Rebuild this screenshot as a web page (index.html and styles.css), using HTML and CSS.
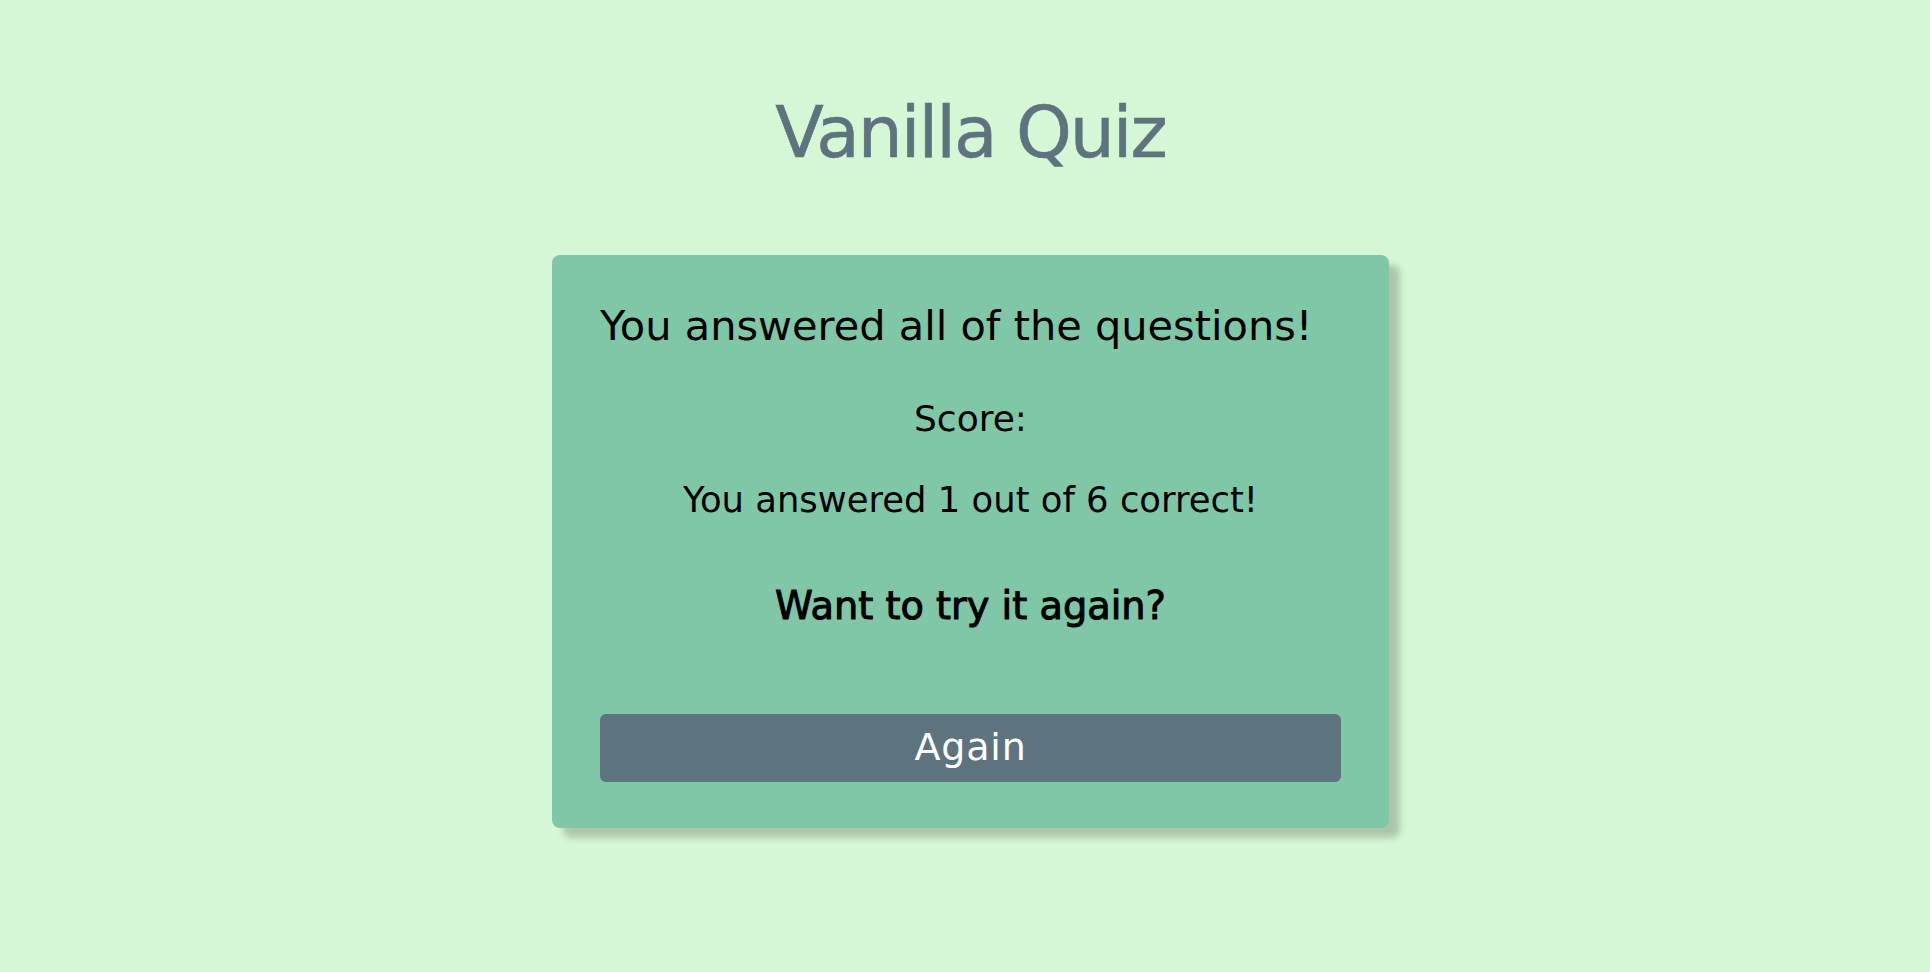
FILE: index.html
```html
<!DOCTYPE html>
<html lang="en">
<head>
  <meta charset="utf-8">
  <title>Vanilla Quiz</title>
  <link rel="stylesheet" href="styles.css">
</head>
<body>
  <main class="page">
    <h1 class="page-title">Vanilla Quiz</h1>
    <section class="quiz-card">
      <h2 class="result-heading">You answered all of the questions!</h2>
      <p class="score-label">Score:</p>
      <p class="score-text">You answered 1 out of 6 correct!</p>
      <p class="retry-prompt">Want to try it again?</p>
      <button class="again-button" type="button">Again</button>
    </section>
  </main>
</body>
</html>
```
FILE: styles.css
```css
html, body {
  margin: 0;
  padding: 0;
}

body {
  background: #d6f7d6;
  font-family: "DejaVu Sans", "Liberation Sans", sans-serif;
  color: #000;
  min-height: 972px;
}

.page {
  display: flex;
  flex-direction: column;
  align-items: center;
  padding: 90px 0 0 11px;
}

.page-title {
  margin: 0;
  font-size: 71px;
  line-height: 1.2;
  font-weight: normal;
  letter-spacing: -2px;
  color: #5d737e;
  -webkit-text-stroke: 0.6px #5d737e;
}

.quiz-card {
  box-sizing: border-box;
  width: 837px;
  margin-top: 80px;
  padding: 46px 48px 46px;
  background: #7fc7a6;
  border-radius: 8px;
  box-shadow: 11px 10px 7px rgba(0, 0, 0, 0.2);
  display: flex;
  flex-direction: column;
  text-align: center;
}

.result-heading {
  margin: 0;
  font-size: 41.5px;
  line-height: 1.2;
  font-weight: normal;
  text-align: left;
}

.score-label {
  margin: 46px 0 0;
  font-size: 36px;
  line-height: 1.2;
}

.score-text {
  margin: 39px 0 0;
  font-size: 35.4px;
  line-height: 1.2;
}

/* medium weight: regular face thickened with a stroke */
.retry-prompt {
  margin: 62px 0 0;
  font-size: 38.3px;
  line-height: 1.13;
  font-weight: normal;
  -webkit-text-stroke: 1px #000;
}

.again-button {
  margin-top: 87px;
  height: 68px;
  border: none;
  border-radius: 6px;
  background: #5d737e;
  color: #fff;
  font-family: inherit;
  font-size: 38px;
  line-height: 1.2;
  letter-spacing: 0.8px;
  cursor: pointer;
}
```
